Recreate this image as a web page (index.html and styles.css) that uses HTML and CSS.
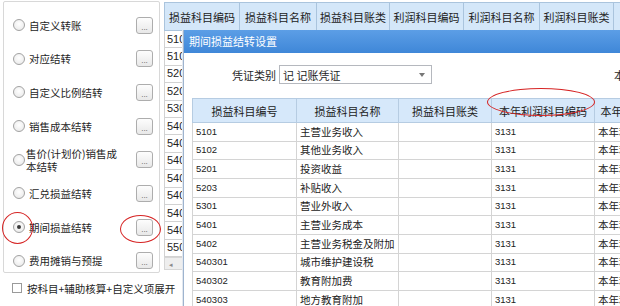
FILE: index.html
```html
<!DOCTYPE html>
<html lang="zh-CN">
<head>
<meta charset="utf-8">
<title>期间损益结转设置</title>
<link rel="stylesheet" href="styles.css">
</head>
<body>
<div class="screen">
  <div class="main">
    <div class="left">
      <div class="panel">
        <div class="opt"><span class="radio"></span><span class="lbl">自定义转账</span><span class="btn">...</span></div>
        <div class="opt"><span class="radio"></span><span class="lbl">对应结转</span><span class="btn">...</span></div>
        <div class="opt"><span class="radio"></span><span class="lbl">自定义比例结转</span><span class="btn">...</span></div>
        <div class="opt"><span class="radio"></span><span class="lbl">销售成本结转</span><span class="btn">...</span></div>
        <div class="opt"><span class="radio"></span><span class="lbl two">售价(计划价)销售成<br>本结转</span><span class="btn">...</span></div>
        <div class="opt"><span class="radio"></span><span class="lbl">汇兑损益结转</span><span class="btn">...</span></div>
        <div class="opt"><span class="radio on"></span><span class="lbl">期间损益结转</span><span class="btn">...</span></div>
        <div class="opt"><span class="radio"></span><span class="lbl">费用摊销与预提</span><span class="btn">...</span></div>
      </div>
      <div class="chk"><span class="box"></span><span class="chk-text">按科目+辅助核算+自定义项展开</span></div>
    </div>
    <div class="grid-wrap">
      <table class="bg-table">
        <colgroup><col class="c1"><col class="c2"><col class="c3"><col class="c4"><col class="c5"><col class="c6"><col class="c7"></colgroup>
        <thead>
          <tr><th>损益科目编码</th><th>损益科目名称</th><th>损益科目账类</th><th>利润科目编码</th><th>利润科目名称</th><th>利润科目账类</th><th>本年</th></tr>
        </thead>
        <tbody>
          <tr><td>5101</td><td></td><td></td><td></td><td></td><td></td><td></td></tr>
          <tr><td>5102</td><td></td><td></td><td></td><td></td><td></td><td></td></tr>
          <tr><td>5201</td><td></td><td></td><td></td><td></td><td></td><td></td></tr>
          <tr><td>5203</td><td></td><td></td><td></td><td></td><td></td><td></td></tr>
          <tr><td>5301</td><td></td><td></td><td></td><td></td><td></td><td></td></tr>
          <tr><td>5401</td><td></td><td></td><td></td><td></td><td></td><td></td></tr>
          <tr><td>5402</td><td></td><td></td><td></td><td></td><td></td><td></td></tr>
          <tr><td>540301</td><td></td><td></td><td></td><td></td><td></td><td></td></tr>
          <tr><td>540302</td><td></td><td></td><td></td><td></td><td></td><td></td></tr>
          <tr><td>540303</td><td></td><td></td><td></td><td></td><td></td><td></td></tr>
          <tr><td>5404</td><td></td><td></td><td></td><td></td><td></td><td></td></tr>
          <tr><td>5405</td><td></td><td></td><td></td><td></td><td></td><td></td></tr>
          <tr><td>5501</td><td></td><td></td><td></td><td></td><td></td><td></td></tr>
        </tbody>
      </table>
      <div class="hscroll"><span class="arrow">&#9666;</span></div>
    </div>
  </div>

  <div class="dialog">
    <div class="title">期间损益结转设置</div>
    <div class="dbody">
      <div class="form-row">
        <span class="flabel">凭证类别</span>
        <div class="select"><span>记 记账凭证</span><span class="caret"></span></div>
        <span class="flabel2">本年利润科目</span>
      </div>
      <table class="in-table">
        <colgroup><col class="d1"><col class="d2"><col class="d3"><col class="d4"><col class="d5"></colgroup>
        <thead>
          <tr><th>损益科目编号</th><th>损益科目名称</th><th>损益科目账类</th><th>本年利润科目编码</th><th>本年利润科目名称</th></tr>
        </thead>
        <tbody>
          <tr><td class="num">5101</td><td>主营业务收入</td><td></td><td class="num">3131</td><td>本年利润</td></tr>
          <tr><td class="num">5102</td><td>其他业务收入</td><td></td><td class="num">3131</td><td>本年利润</td></tr>
          <tr><td class="num">5201</td><td>投资收益</td><td></td><td class="num">3131</td><td>本年利润</td></tr>
          <tr><td class="num">5203</td><td>补贴收入</td><td></td><td class="num">3131</td><td>本年利润</td></tr>
          <tr><td class="num">5301</td><td>营业外收入</td><td></td><td class="num">3131</td><td>本年利润</td></tr>
          <tr><td class="num">5401</td><td>主营业务成本</td><td></td><td class="num">3131</td><td>本年利润</td></tr>
          <tr><td class="num">5402</td><td>主营业务税金及附加</td><td></td><td class="num">3131</td><td>本年利润</td></tr>
          <tr><td class="num">540301</td><td>城市维护建设税</td><td></td><td class="num">3131</td><td>本年利润</td></tr>
          <tr><td class="num">540302</td><td>教育附加费</td><td></td><td class="num">3131</td><td>本年利润</td></tr>
          <tr><td class="num">540303</td><td>地方教育附加</td><td></td><td class="num">3131</td><td>本年利润</td></tr>
        </tbody>
      </table>
    </div>
  </div>

  <div class="mark m1"></div>
  <div class="mark m2"></div>
  <div class="mark m3"></div>
</div>
</body>
</html>
```

FILE: styles.css
```css
* { box-sizing: border-box; }
html, body { margin: 0; padding: 0; }
body {
  background: #fff;
  font-family: "Noto Sans CJK SC", "Liberation Sans", sans-serif;
  font-size: 11px;
  color: #1e1e1e;
}
.screen {
  position: relative;
  width: 620px;
  height: 306px;
  overflow: hidden;
  background: #fff;
}
.main {
  display: flex;
  align-items: flex-start;
  gap: 4px;
  padding: 1px 0 0 3px;
}

/* left option panel */
.left {
  width: 157px;
  flex: none;
  display: flex;
  flex-direction: column;
  font-size: 10.5px;
}
.panel {
  height: 272px;
  border: 1px solid #d8d8d8;
  border-radius: 2px;
  padding: 11px 6px 0 9px;
  display: grid;
  grid-auto-rows: 24px;
  row-gap: 9.7px;
}
.opt {
  display: flex;
  align-items: center;
}
.radio {
  position: relative;
  flex: none;
  width: 12px;
  height: 12px;
  margin-right: 4px;
  border: 1px solid #a2a2a2;
  border-radius: 50%;
  background: radial-gradient(circle at 50% 40%, #ffffff, #e6e6e6);
}
.radio.on::after {
  content: "";
  position: absolute;
  left: 3px;
  top: 3px;
  width: 4px;
  height: 4px;
  border-radius: 50%;
  background: #3a3a3a;
}
.lbl {
  flex: 1;
  line-height: 13px;
  white-space: nowrap;
}
.lbl.two { margin-left: -3px; }
.btn {
  flex: none;
  width: 17px;
  height: 17px;
  border: 1px solid #adadad;
  border-radius: 3px;
  background: linear-gradient(#fdfdfd, #e8e8e8);
  color: #555;
  font-family: "Liberation Sans", sans-serif;
  font-size: 8px;
  line-height: 19px;
  text-align: center;
}
.chk {
  display: flex;
  align-items: center;
  height: 14px;
  margin-top: 8px;
  padding-left: 9px;
  white-space: nowrap;
}
.chk-text { white-space: nowrap; }
.box {
  flex: none;
  width: 10px;
  height: 10px;
  margin-right: 5px;
  border: 1px solid #9a9a9a;
  background: #fff;
}

/* background grid */
.grid-wrap {
  margin-top: 1px;
  flex: none;
  width: 470px;
}
.bg-table {
  border-collapse: collapse;
  table-layout: fixed;
  width: 523px;
}
.bg-table .c1 { width: 75px; }
.bg-table .c2 { width: 77px; }
.bg-table .c3 { width: 73px; }
.bg-table .c4 { width: 74px; }
.bg-table .c5 { width: 76px; }
.bg-table .c6 { width: 74px; }
.bg-table .c7 { width: 74px; }
.bg-table th {
  height: 28px;
  padding: 0;
  background: #d4e7f9;
  border: 1px solid #aac4dd;
  font-weight: normal;
  font-size: 11px;
  color: #222;
  white-space: nowrap;
  overflow: hidden;
}
.bg-table td {
  height: 17.4px;
  padding: 0 0 0 2px;
  border: 1px solid #d2d2d2;
  font-family: "Liberation Sans", sans-serif;
  font-size: 11px;
  line-height: 15px;
  white-space: nowrap;
  overflow: hidden;
}
.hscroll {
  width: 30px;
  height: 13px;
  background: #eeeeee;
  border: 1px solid #d6d6d6;
  display: flex;
  align-items: center;
}
.arrow {
  font-size: 7px;
  color: #8a8a8a;
  margin-left: 4px;
}

/* dialog window */
.dialog {
  position: absolute;
  left: 183px;
  top: 30px;
  width: 540px;
  height: 290px;
  background: #fff;
  border-left: 1px solid #9eb4cf;
  box-shadow: -1px 0 0 #e3e8ef;
}
.title {
  height: 23px;
  line-height: 23px;
  padding-left: 5px;
  background: linear-gradient(#5c9ee6, #3f87d8);
  color: #fff;
  font-size: 11px;
}
.dbody {
  padding: 12px 0 0 8px;
}
.form-row {
  display: flex;
  align-items: center;
  height: 19px;
}
.flabel {
  flex: none;
  margin-left: 40px;
  margin-right: 3px;
  white-space: nowrap;
}
.select {
  flex: none;
  width: 153px;
  height: 19px;
  border: 1px solid #b5b8be;
  display: flex;
  align-items: center;
  justify-content: space-between;
  padding: 0 6px 0 3px;
  background: #fff;
}
.caret {
  width: 0;
  height: 0;
  border-left: 3px solid transparent;
  border-right: 3px solid transparent;
  border-top: 4px solid #777;
}
.flabel2 {
  margin-left: 182px;
  white-space: nowrap;
  flex: none;
}
.in-table {
  margin-top: 14px;
  border-collapse: collapse;
  table-layout: fixed;
  width: 502px;
}
.in-table .d1 { width: 104px; }
.in-table .d2 { width: 102px; }
.in-table .d3 { width: 93px; }
.in-table .d4 { width: 103px; }
.in-table .d5 { width: 100px; }
.in-table th {
  height: 24px;
  padding: 0;
  background: #d6e8fa;
  border: 1px solid #b6cce2;
  font-weight: normal;
  font-size: 11px;
  color: #222;
  white-space: nowrap;
  overflow: hidden;
}
.in-table td {
  height: 18.67px;
  padding: 0 0 0 3px;
  border: 1px solid #d4d4d4;
  font-size: 10.5px;
  line-height: 14px;
  white-space: nowrap;
  overflow: hidden;
  color: #222;
}
.in-table td.num {
  font-family: "Liberation Sans", sans-serif;
  font-size: 9.5px;
}

/* red annotation ellipses */
.mark {
  position: absolute;
  border: 1.5px solid #d62424;
  border-radius: 50%;
}
.m1 { left: 2px; top: 212px; width: 31px; height: 32px; }
.m2 { left: 120px; top: 215px; width: 41px; height: 28px; }
.m3 { left: 487px; top: 88px; width: 108px; height: 28px; }
```
